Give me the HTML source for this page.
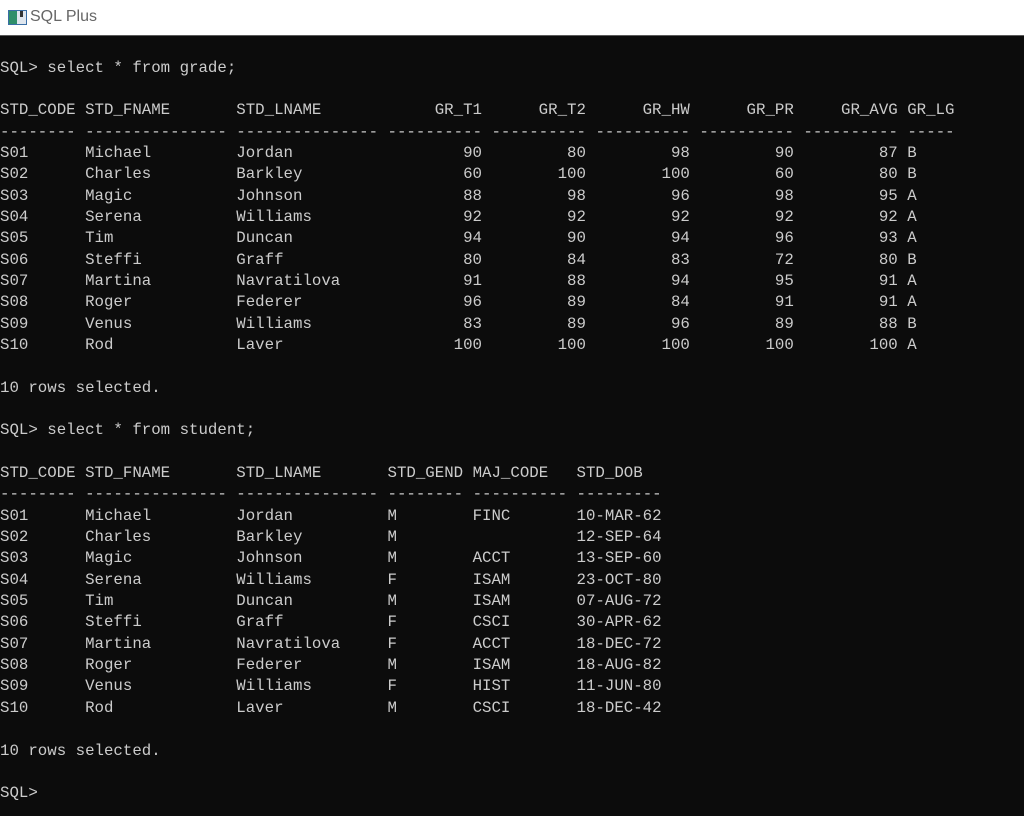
<!DOCTYPE html>
<html><head><meta charset="utf-8"><style>
html,body{margin:0;padding:0;width:1024px;height:816px;overflow:hidden;background:#0c0c0c}
#tb{position:absolute;left:0;top:0;width:1024px;height:35px;background:#fff;border-bottom:1px solid #5a5a5a}
#tb .t{position:absolute;left:30px;top:8px;font:16px "Liberation Sans",sans-serif;color:#666}
#ic{position:absolute;left:8px;top:10px;width:19px;height:15px;}
#con{position:absolute;left:0;top:57.5px;font-family:"Liberation Mono",monospace;font-size:15.75px;color:#cccccc;}
.l{height:21.35px;line-height:21.35px;white-space:pre}
.l span{display:inline-block}
.a{width:9ch}.b{width:16ch}.c{width:16ch}
.n{width:10ch;text-align:right;margin-right:1ch}
.g{width:9ch}.m{width:11ch}
</style></head><body>
<div id="tb">
<svg id="ic" viewBox="0 0 19 15"><rect x="0" y="0" width="19" height="15" fill="#3a6ea5"/><rect x="1" y="1" width="8" height="13" fill="#2f8f6a"/><rect x="9" y="1" width="9" height="13" fill="#dfe6ee"/><rect x="12" y="1" width="3" height="6" fill="#333"/></svg>
<div class="t">SQL Plus</div></div>
<div id="con">
<div class="l">SQL&gt; select * from grade;</div>
<div class="l"> </div>
<div class="l"><span class="a">STD_CODE</span><span class="b">STD_FNAME</span><span class="c">STD_LNAME</span><span class="n">GR_T1</span><span class="n">GR_T2</span><span class="n">GR_HW</span><span class="n">GR_PR</span><span class="n">GR_AVG</span>GR_LG</div>
<div class="l">-------- --------------- --------------- ---------- ---------- ---------- ---------- ---------- -----</div>
<div class="l"><span class="a">S01</span><span class="b">Michael</span><span class="c">Jordan</span><span class="n">90</span><span class="n">80</span><span class="n">98</span><span class="n">90</span><span class="n">87</span>B</div>
<div class="l"><span class="a">S02</span><span class="b">Charles</span><span class="c">Barkley</span><span class="n">60</span><span class="n">100</span><span class="n">100</span><span class="n">60</span><span class="n">80</span>B</div>
<div class="l"><span class="a">S03</span><span class="b">Magic</span><span class="c">Johnson</span><span class="n">88</span><span class="n">98</span><span class="n">96</span><span class="n">98</span><span class="n">95</span>A</div>
<div class="l"><span class="a">S04</span><span class="b">Serena</span><span class="c">Williams</span><span class="n">92</span><span class="n">92</span><span class="n">92</span><span class="n">92</span><span class="n">92</span>A</div>
<div class="l"><span class="a">S05</span><span class="b">Tim</span><span class="c">Duncan</span><span class="n">94</span><span class="n">90</span><span class="n">94</span><span class="n">96</span><span class="n">93</span>A</div>
<div class="l"><span class="a">S06</span><span class="b">Steffi</span><span class="c">Graff</span><span class="n">80</span><span class="n">84</span><span class="n">83</span><span class="n">72</span><span class="n">80</span>B</div>
<div class="l"><span class="a">S07</span><span class="b">Martina</span><span class="c">Navratilova</span><span class="n">91</span><span class="n">88</span><span class="n">94</span><span class="n">95</span><span class="n">91</span>A</div>
<div class="l"><span class="a">S08</span><span class="b">Roger</span><span class="c">Federer</span><span class="n">96</span><span class="n">89</span><span class="n">84</span><span class="n">91</span><span class="n">91</span>A</div>
<div class="l"><span class="a">S09</span><span class="b">Venus</span><span class="c">Williams</span><span class="n">83</span><span class="n">89</span><span class="n">96</span><span class="n">89</span><span class="n">88</span>B</div>
<div class="l"><span class="a">S10</span><span class="b">Rod</span><span class="c">Laver</span><span class="n">100</span><span class="n">100</span><span class="n">100</span><span class="n">100</span><span class="n">100</span>A</div>
<div class="l"> </div>
<div class="l">10 rows selected.</div>
<div class="l"> </div>
<div class="l">SQL&gt; select * from student;</div>
<div class="l"> </div>
<div class="l"><span class="a">STD_CODE</span><span class="b">STD_FNAME</span><span class="c">STD_LNAME</span><span class="g">STD_GEND</span><span class="m">MAJ_CODE</span>STD_DOB</div>
<div class="l">-------- --------------- --------------- -------- ---------- ---------</div>
<div class="l"><span class="a">S01</span><span class="b">Michael</span><span class="c">Jordan</span><span class="g">M</span><span class="m">FINC</span>10-MAR-62</div>
<div class="l"><span class="a">S02</span><span class="b">Charles</span><span class="c">Barkley</span><span class="g">M</span><span class="m"> </span>12-SEP-64</div>
<div class="l"><span class="a">S03</span><span class="b">Magic</span><span class="c">Johnson</span><span class="g">M</span><span class="m">ACCT</span>13-SEP-60</div>
<div class="l"><span class="a">S04</span><span class="b">Serena</span><span class="c">Williams</span><span class="g">F</span><span class="m">ISAM</span>23-OCT-80</div>
<div class="l"><span class="a">S05</span><span class="b">Tim</span><span class="c">Duncan</span><span class="g">M</span><span class="m">ISAM</span>07-AUG-72</div>
<div class="l"><span class="a">S06</span><span class="b">Steffi</span><span class="c">Graff</span><span class="g">F</span><span class="m">CSCI</span>30-APR-62</div>
<div class="l"><span class="a">S07</span><span class="b">Martina</span><span class="c">Navratilova</span><span class="g">F</span><span class="m">ACCT</span>18-DEC-72</div>
<div class="l"><span class="a">S08</span><span class="b">Roger</span><span class="c">Federer</span><span class="g">M</span><span class="m">ISAM</span>18-AUG-82</div>
<div class="l"><span class="a">S09</span><span class="b">Venus</span><span class="c">Williams</span><span class="g">F</span><span class="m">HIST</span>11-JUN-80</div>
<div class="l"><span class="a">S10</span><span class="b">Rod</span><span class="c">Laver</span><span class="g">M</span><span class="m">CSCI</span>18-DEC-42</div>
<div class="l"> </div>
<div class="l">10 rows selected.</div>
<div class="l"> </div>
<div class="l">SQL&gt;</div>
</div>
</body></html>
